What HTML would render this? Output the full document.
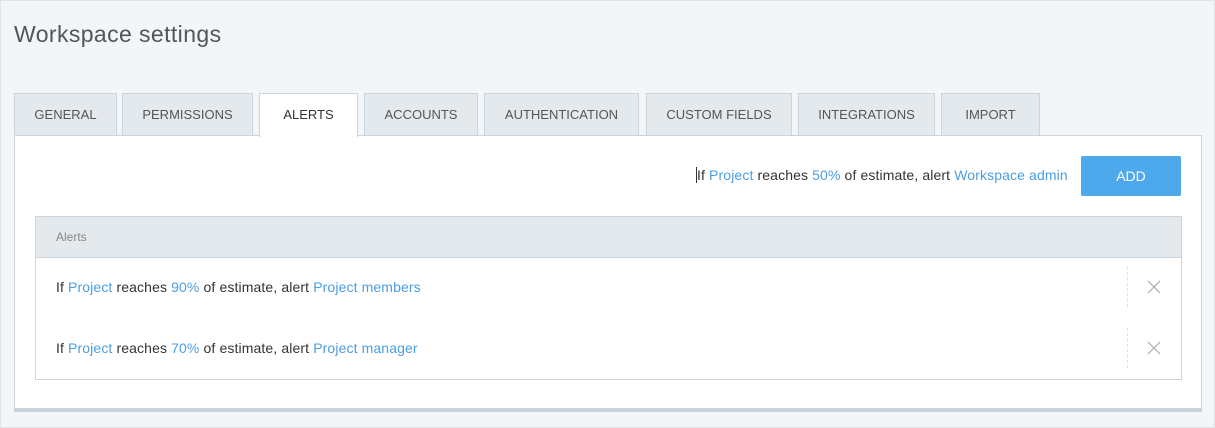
<!DOCTYPE html>
<html><head><style>
*{box-sizing:border-box;margin:0;padding:0}
body{width:1215px;height:428px;background:#f2f6f8;font-family:"Liberation Sans",Arial,sans-serif;position:relative;overflow:hidden}
.frame{position:absolute;left:0;top:0;width:1215px;height:428px;border:1px solid #dfe4e8;pointer-events:none}
.t{position:absolute;left:14px;top:21px;font-size:23px;color:#555;letter-spacing:0.4px}
.tab{position:absolute;top:93px;height:43px;background:#e4e9ed;border:1px solid #ccd5dc;border-bottom:none;font-size:13px;color:#555;text-align:center;line-height:41px}
.tab.a{background:#fff;color:#333;height:44px;z-index:2}
.panel{position:absolute;left:14px;top:135px;width:1188px;height:277px;background:#fff;border:1px solid #ccd5dc;border-bottom:4px solid #c9d2d9}
.b{color:#4a9ee4}
.s{position:absolute;font-size:14px;color:#333;white-space:nowrap;letter-spacing:0.12px}
.add{position:absolute;left:1081px;top:156px;width:100px;height:40px;background:#4ea8ec;border-radius:2px;color:#fff;font-size:14px;text-align:center;line-height:40px}
.tbl{position:absolute;left:35px;top:216px;width:1147px;height:164px;border:1px solid #ccd5dc;background:#fff}
.hd{height:41px;background:#e4e9ed;border-bottom:1px solid #ccd5dc;font-size:12px;color:#888;padding-left:20px;line-height:40px}
.sep{position:absolute;left:1091px;width:0;border-left:1px dashed #e2e2e2;height:40px}
.x{position:absolute;left:1111px;width:14px;height:14px}
</style></head><body>
<div class="t">Workspace settings</div>
<div class="tab" style="left:14px;width:103px">GENERAL</div>
<div class="tab" style="left:122px;width:131px">PERMISSIONS</div>
<div class="tab a" style="left:259px;width:99px">ALERTS</div>
<div class="tab" style="left:364px;width:114px">ACCOUNTS</div>
<div class="tab" style="left:484px;width:155px">AUTHENTICATION</div>
<div class="tab" style="left:646px;width:146px">CUSTOM FIELDS</div>
<div class="tab" style="left:798px;width:137px">INTEGRATIONS</div>
<div class="tab" style="left:941px;width:99px">IMPORT</div>
<div class="panel"></div>
<div class="s" style="left:696px;top:167px"><span style="border-left:1px solid #333">I</span>f <span class="b">Project</span> reaches <span class="b">50%</span> of estimate, alert <span class="b">Workspace admin</span></div>
<div class="add">ADD</div>
<div class="tbl"><div class="hd">Alerts</div>
<div class="s" style="left:20px;top:62px">If <span class="b">Project</span> reaches <span class="b">90%</span> of estimate, alert <span class="b">Project members</span></div>
<div class="sep" style="top:50px"></div>
<svg class="x" style="top:63px" viewBox="0 0 14 14"><path d="M1 1L13 13M13 1L1 13" stroke="#aaa" stroke-width="1.2"/></svg>
<div class="s" style="left:20px;top:123px">If <span class="b">Project</span> reaches <span class="b">70%</span> of estimate, alert <span class="b">Project manager</span></div>
<div class="sep" style="top:111px"></div>
<svg class="x" style="top:124px" viewBox="0 0 14 14"><path d="M1 1L13 13M13 1L1 13" stroke="#aaa" stroke-width="1.2"/></svg>
</div>
<div class="frame"></div>
</body></html>
